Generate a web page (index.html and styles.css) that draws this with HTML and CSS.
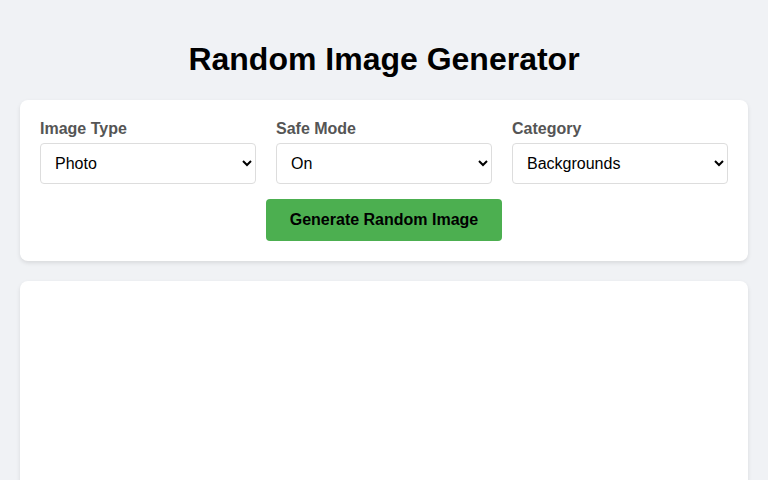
FILE: index.html
```html
<!DOCTYPE html>
<html lang="en">
<head>
<meta charset="utf-8">
<title>Random Image Generator</title>
<link rel="stylesheet" href="styles.css">
</head>
<body>
<h1 class="title">Random Image Generator</h1>
<div class="card controls">
  <div class="fields">
    <div class="field">
      <label class="label" for="type">Image Type</label>
      <select id="type" class="select"><option>Photo</option><option>Illustration</option><option>Vector</option></select>
    </div>
    <div class="field">
      <label class="label" for="safe">Safe Mode</label>
      <select id="safe" class="select"><option>On</option><option>Off</option></select>
    </div>
    <div class="field">
      <label class="label" for="cat">Category</label>
      <select id="cat" class="select"><option>Backgrounds</option><option>Nature</option><option>Science</option></select>
    </div>
  </div>
  <div class="actions">
    <button class="btn" type="button">Generate Random Image</button>
  </div>
</div>
<div class="card result"></div>
</body>
</html>
```
FILE: styles.css
```css
html, body {
  margin: 0;
  background: #f0f2f5;
}
body {
  padding: 20px;
  font-family: "Liberation Sans", Arial, sans-serif;
  color: #000;
}
.title {
  text-align: center;
  font-size: 32px;
  margin: 21px 0 22px;
  line-height: 37px;
}
.card {
  background: #fff;
  border-radius: 8px;
  box-shadow: 0 2px 4px rgba(0,0,0,0.1);
  padding: 20px;
}
.fields {
  display: grid;
  grid-template-columns: repeat(3, 1fr);
  gap: 20px;
  margin-bottom: 15px;
}
.field {
  display: flex;
  flex-direction: column;
}
.label {
  font-weight: bold;
  font-size: 16px;
  line-height: 18px;
  color: #555;
  margin-bottom: 5px;
}
.select {
  font-family: "Liberation Sans", Arial, sans-serif;
  font-size: 16px;
  padding: 10px;
  border: 1px solid #ddd;
  border-radius: 4px;
  background: #fff;
  color: #000;
  height: 41px;
}
.actions {
  display: flex;
  justify-content: center;
}
.btn {
  font-family: "Liberation Sans", Arial, sans-serif;
  font-size: 16px;
  font-weight: bold;
  line-height: 18px;
  padding: 12px 24px;
  background: #4caf50;
  color: #000;
  border: none;
  border-radius: 4px;
  cursor: pointer;
}
.result {
  margin-top: 20px;
  height: 400px;
}
```
